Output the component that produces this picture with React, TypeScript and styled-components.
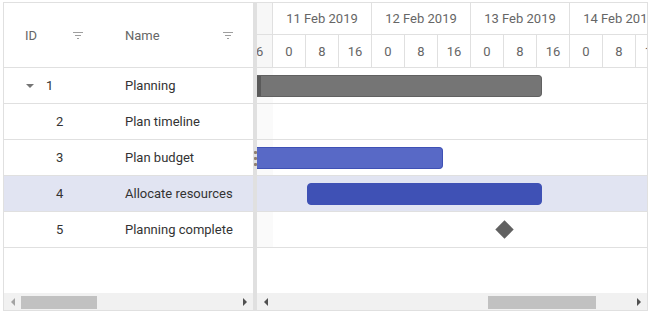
import styled, { createGlobalStyle } from "styled-components"

const GlobalStyle = createGlobalStyle`
    body {
        margin:0;
        background:#fff;
        font-family: Roboto, "Liberation Sans", Arial, sans-serif;
    }
`

const Page = styled.div`
    padding:2px 0 0 3px;
`
const GanttBox = styled.div`
    width:645px;
    height:309px;
    box-sizing:border-box;
    border:1px solid #e0e0e0;
    display:flex;
    overflow:hidden;
`
const Pane = styled.div<{ $w: number; $open?: boolean }>`
    width:${p => p.$w}px;
    flex:none;
    display:flex;
    flex-direction:column;
    overflow:${p => p.$open ? "visible" : "hidden"};
    position:relative;
`
const Splitter = styled.div`
    width:4px;
    flex:none;
    background:#e0e0e0;
    position:relative;
    z-index:2;
`
const GridHeader = styled.div`
    height:65px;
    box-sizing:border-box;
    border-bottom:1px solid #e0e0e0;
    display:flex;
    flex:none;
`
const HeaderCell = styled.div<{ $w?: number; $pr: number }>`
    ${p => p.$w ? `width:${p.$w}px;flex:none;` : "flex:1;"}
    box-sizing:border-box;
    display:flex;
    align-items:center;
    justify-content:space-between;
    padding:0 ${p => p.$pr}px 0 21px;
    font-size:13px;
    color:#666;
`
const Rows = styled.div`
    flex:1;
    position:relative;
`
const Row = styled.div<{ $sel?: boolean }>`
    height:36px;
    box-sizing:border-box;
    border-bottom:1px solid #e0e0e0;
    display:flex;
    align-items:center;
    background:${p => p.$sel ? "#e1e4f2" : "transparent"};
    position:relative;
    font-size:13px;
    color:#333;
`
const IdCell = styled.div<{ $pl: number }>`
    width:100px;
    flex:none;
    display:flex;
    align-items:center;
    gap:12px;
    padding-left:${p => p.$pl}px;
    box-sizing:border-box;
`
const NameCell = styled.div`
    flex:1;
    padding-left:21px;
    white-space:nowrap;
`
const Toggle = styled.span`
    width:0;
    height:0;
    border-left:4px solid transparent;
    border-right:4px solid transparent;
    border-top:4px solid #757575;
    margin-top:1px;
`
const Tier = styled.div<{ $h: number }>`
    height:${p => p.$h}px;
    box-sizing:border-box;
    border-bottom:1px solid #e0e0e0;
    display:flex;
    flex:none;
    overflow:hidden;
`
const TimeCell = styled.div<{ $w: number; $off?: number; $shade?: boolean }>`
    width:${p => p.$w}px;
    flex:none;
    margin-left:${p => p.$off || 0}px;
    box-sizing:border-box;
    border-right:1px solid #e0e0e0;
    display:flex;
    align-items:center;
    justify-content:center;
    font-size:13px;
    color:#666;
    white-space:nowrap;
    background:${p => p.$shade ? "#f7f7f7" : "transparent"};
`
const ShadeColumn = styled.div`
    position:absolute;
    left:0;
    top:0;
    width:16px;
    height:180px;
    background:#fafafa;
`
const Bar = styled.div<{ $bg: string; $bd: string }>`
    position:absolute;
    top:7px;
    height:22px;
    box-sizing:border-box;
    background:${p => p.$bg};
    border:1px solid ${p => p.$bd};
    border-radius:4px;
    overflow:hidden;
`
const Progress = styled.div`
    width:4px;
    height:100%;
    background:#5a5a5a;
`
const Grips = styled.div`
    position:absolute;
    left:-3px;
    top:11px;
    display:flex;
    flex-direction:column;
    gap:3px;
    z-index:3;
`
const Dot = styled.span`
    width:3px;
    height:3px;
    background:#8f7f70;
    border-radius:1px;
`
const Milestone = styled.div`
    position:absolute;
    top:11px;
    width:13px;
    height:13px;
    background:#616161;
    transform:rotate(45deg);
`
const ScrollBar = styled.div`
    height:17px;
    flex:none;
    display:flex;
    background:#f1f1f1;
`
const Arrow = styled.div`
    width:17px;
    flex:none;
    display:flex;
    align-items:center;
    justify-content:center;
`
const Tri = styled.span<{ $dir: "l" | "r"; $off?: boolean }>`
    width:0;
    height:0;
    border-top:4px solid transparent;
    border-bottom:4px solid transparent;
    ${p => p.$dir === "l"
        ? `border-right:4px solid ${p.$off ? "#a3a3a3" : "#505050"};`
        : `border-left:4px solid ${p.$off ? "#a3a3a3" : "#505050"};`}
`
const Track = styled.div`
    flex:1;
    position:relative;
`
const Thumb = styled.div<{ $w: number }>`
    position:absolute;
    top:3px;
    height:13px;
    width:${p => p.$w}px;
    background:#c1c1c1;
`

const FilterIcon = () => (
    <svg width="10" height="7" viewBox="0 0 10 7">
        <rect x="0" y="0" width="10" height="1" fill="#9e9e9e" />
        <rect x="2" y="3" width="6" height="1" fill="#9e9e9e" />
        <rect x="4" y="6" width="2" height="1" fill="#9e9e9e" />
    </svg>
)

type Task = {
    id: number
    name: string
    parent?: boolean
    sel?: boolean
}

const tasks: Task[] = [
    { id: 1, name: "Planning", parent: true },
    { id: 2, name: "Plan timeline" },
    { id: 3, name: "Plan budget" },
    { id: 4, name: "Allocate resources", sel: true },
    { id: 5, name: "Planning complete" },
]

const days = ["11 Feb 2019", "12 Feb 2019", "13 Feb 2019", "14 Feb 2019"]
const hours = ["0", "8", "16"]

const clipLeft = { borderTopLeftRadius: 0, borderBottomLeftRadius: 0, borderLeft: "none" }

const renderChartItem = (id: number) => {
    if (id === 1) {
        return (
            <Bar $bg="#757575" $bd="#616161" style={{ left: 0, width: 285, ...clipLeft }}>
                <Progress />
            </Bar>
        )
    }
    if (id === 3) {
        return (
            <>
                <Grips><Dot /><Dot /><Dot /></Grips>
                <Bar $bg="#5869c6" $bd="#3f51b5" style={{ left: 0, width: 186, ...clipLeft }} />
            </>
        )
    }
    if (id === 4) {
        return <Bar $bg="#3f51b5" $bd="#3f51b5" style={{ left: 50, width: 235 }} />
    }
    if (id === 5) {
        return <Milestone style={{ left: 241 }} />
    }
    return null
}

export default function App() {
    return (
        <Page>
            <GlobalStyle />
            <GanttBox>
                <Pane $w={249}>
                    <GridHeader>
                        <HeaderCell $w={100} $pr={21}>ID<FilterIcon /></HeaderCell>
                        <HeaderCell $pr={20}>Name<FilterIcon /></HeaderCell>
                    </GridHeader>
                    <Rows>
                        {tasks.map(t => (
                            <Row key={t.id} $sel={t.sel}>
                                <IdCell $pl={t.parent ? 22 : 52}>
                                    {t.parent && <Toggle />}
                                    <span>{t.id}</span>
                                </IdCell>
                                <NameCell>{t.name}</NameCell>
                            </Row>
                        ))}
                    </Rows>
                    <ScrollBar>
                        <Arrow><Tri $dir="l" $off /></Arrow>
                        <Track><Thumb $w={76} style={{ left: 0 }} /></Track>
                        <Arrow><Tri $dir="r" /></Arrow>
                    </ScrollBar>
                </Pane>
                <Splitter />
                <Pane $w={390} $open>
                    <Tier $h={32}>
                        <TimeCell $w={99} $off={-83} $shade />
                        {days.map(d => <TimeCell key={d} $w={99}>{d}</TimeCell>)}
                    </Tier>
                    <Tier $h={33}>
                        <TimeCell $w={33} $off={-17} $shade>16</TimeCell>
                        {days.flatMap(d => hours.map(h => <TimeCell key={d + h} $w={33}>{h}</TimeCell>))}
                    </Tier>
                    <Rows>
                        <ShadeColumn />
                        {tasks.map(t => (
                            <Row key={t.id} $sel={t.sel}>
                                {renderChartItem(t.id)}
                            </Row>
                        ))}
                    </Rows>
                    <ScrollBar>
                        <Arrow><Tri $dir="l" /></Arrow>
                        <Track><Thumb $w={108} style={{ left: 214 }} /></Track>
                        <Arrow><Tri $dir="r" /></Arrow>
                    </ScrollBar>
                </Pane>
            </GanttBox>
        </Page>
    )
}
